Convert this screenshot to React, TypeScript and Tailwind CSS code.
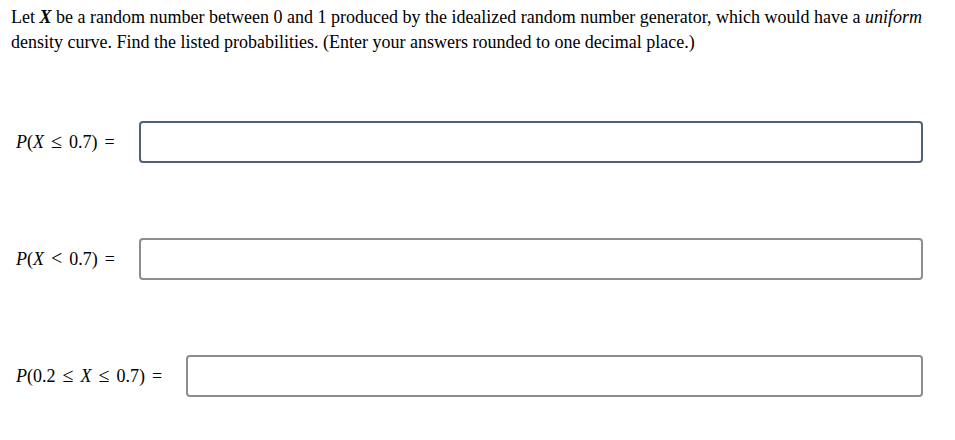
import React from 'react';

const Op = ({ children }: { children: React.ReactNode }) => (
  <span className="mx-[7px] text-[20px]">{children}</span>
);

const rows = [
  {
    label: (
      <>
        <i>P</i>(<i>X</i>
        <Op>≤</Op>0.7)<span className="ml-[7px]">=</span>
      </>
    ),
    focused: true,
  },
  {
    label: (
      <>
        <i>P</i>(<i>X</i>
        <Op>&lt;</Op>0.7)<span className="ml-[7px]">=</span>
      </>
    ),
    focused: false,
  },
  {
    label: (
      <>
        <i>P</i>(0.2<Op>≤</Op>
        <i>X</i>
        <Op>≤</Op>0.7)<span className="ml-[7px]">=</span>
      </>
    ),
    focused: false,
  },
];

export default function App() {
  return (
    <div
      className="w-[955px] h-[440px] bg-white text-black pl-[11px] pt-[5px]"
      style={{ fontFamily: '"Liberation Serif", "Times New Roman", serif' }}
    >
      <p className="text-[18px] leading-[25px]">
        Let <i className="font-bold">X</i> be a random number between 0 and 1 produced by the idealized
        random number generator, which would have a <i>uniform</i>
        <br />
        density curve. Find the listed probabilities. (Enter your answers rounded to one decimal place.)
      </p>
      <div className="flex flex-col gap-[75px] mt-[66px] pl-[5px] w-[912px]">
        {rows.map((r, i) => (
          <div key={i} className="flex items-center gap-[24px]">
            <span className="text-[18px] leading-[25px] whitespace-nowrap">{r.label}</span>
            <input
              type="text"
              className={
                r.focused
                  ? 'flex-1 h-[42px] rounded-[4px] border-2 border-[#4f6178] bg-white outline-none'
                  : 'flex-1 h-[42px] rounded-[4px] border-2 border-[#8d8d8d] bg-white outline-none'
              }
            />
          </div>
        ))}
      </div>
    </div>
  );
}
